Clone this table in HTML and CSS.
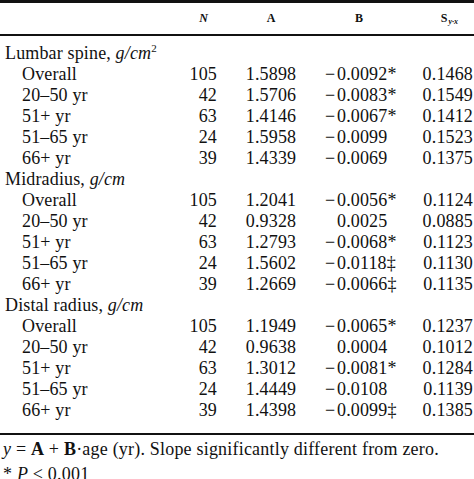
FILE: index.html
```html
<!DOCTYPE html>
<html>
<head>
<meta charset="utf-8">
<link rel="stylesheet" href="styles.css">
</head>
<body>
<table class="data">
  <colgroup>
    <col class="c-label"><col class="c-n"><col class="c-a"><col class="c-b"><col class="c-s">
  </colgroup>
  <thead>
    <tr>
      <th></th>
      <th class="h-n"><i>N</i></th>
      <th class="h-a">A</th>
      <th class="h-b">B</th>
      <th class="h-s">S<sub>y·x</sub></th>
    </tr>
  </thead>
  <tbody>
    <tr class="first"><td class="group" colspan="5">Lumbar spine, <i>g/cm</i><sup>2</sup></td></tr>
    <tr><td class="lbl">Overall</td><td class="n">105</td><td class="a">1.5898</td><td class="b"><span class="sg">−</span>0.0092*</td><td class="s">0.1468</td></tr>
    <tr><td class="lbl">20–50 yr</td><td class="n">42</td><td class="a">1.5706</td><td class="b"><span class="sg">−</span>0.0083*</td><td class="s">0.1549</td></tr>
    <tr><td class="lbl">51+ yr</td><td class="n">63</td><td class="a">1.4146</td><td class="b"><span class="sg">−</span>0.0067*</td><td class="s">0.1412</td></tr>
    <tr><td class="lbl">51–65 yr</td><td class="n">24</td><td class="a">1.5958</td><td class="b"><span class="sg">−</span>0.0099</td><td class="s">0.1523</td></tr>
    <tr><td class="lbl">66+ yr</td><td class="n">39</td><td class="a">1.4339</td><td class="b"><span class="sg">−</span>0.0069</td><td class="s">0.1375</td></tr>
    <tr><td class="group" colspan="5">Midradius, <i>g/cm</i></td></tr>
    <tr><td class="lbl">Overall</td><td class="n">105</td><td class="a">1.2041</td><td class="b"><span class="sg">−</span>0.0056*</td><td class="s">0.1124</td></tr>
    <tr><td class="lbl">20–50 yr</td><td class="n">42</td><td class="a">0.9328</td><td class="b"><span class="sg"></span>0.0025</td><td class="s">0.0885</td></tr>
    <tr><td class="lbl">51+ yr</td><td class="n">63</td><td class="a">1.2793</td><td class="b"><span class="sg">−</span>0.0068*</td><td class="s">0.1123</td></tr>
    <tr><td class="lbl">51–65 yr</td><td class="n">24</td><td class="a">1.5602</td><td class="b"><span class="sg">−</span>0.0118‡</td><td class="s">0.1130</td></tr>
    <tr><td class="lbl">66+ yr</td><td class="n">39</td><td class="a">1.2669</td><td class="b"><span class="sg">−</span>0.0066‡</td><td class="s">0.1135</td></tr>
    <tr><td class="group" colspan="5">Distal radius, <i>g/cm</i></td></tr>
    <tr><td class="lbl">Overall</td><td class="n">105</td><td class="a">1.1949</td><td class="b"><span class="sg">−</span>0.0065*</td><td class="s">0.1237</td></tr>
    <tr><td class="lbl">20–50 yr</td><td class="n">42</td><td class="a">0.9638</td><td class="b"><span class="sg"></span>0.0004</td><td class="s">0.1012</td></tr>
    <tr><td class="lbl">51+ yr</td><td class="n">63</td><td class="a">1.3012</td><td class="b"><span class="sg">−</span>0.0081*</td><td class="s">0.1284</td></tr>
    <tr><td class="lbl">51–65 yr</td><td class="n">24</td><td class="a">1.4449</td><td class="b"><span class="sg">−</span>0.0108</td><td class="s">0.1139</td></tr>
    <tr class="last"><td class="lbl">66+ yr</td><td class="n">39</td><td class="a">1.4398</td><td class="b"><span class="sg">−</span>0.0099‡</td><td class="s">0.1385</td></tr>
  </tbody>
</table>
<div class="notes">
  <p><i>y</i> = <b>A</b> + <b>B</b>·age (yr). Slope significantly different from zero.</p>
  <p>* <i>P</i> &lt; 0.001</p>
</div>
</body>
</html>
```

FILE: styles.css
```css
html, body {
  margin: 0;
  padding: 0;
  background: #fff;
}
body {
  font-family: "Liberation Serif", "DejaVu Serif", serif;
  color: #111;
  width: 474px;
  overflow: hidden;
}
.data {
  border-collapse: collapse;
  width: 474px;
  table-layout: fixed;
  border-top: 3px solid #111;
  font-size: 18px;
}
.c-label { width: 180px; }
.c-n { width: 40px; }
.c-a { width: 102px; }
.c-b { width: 78px; }
.c-s { width: 74px; }

.data thead th {
  height: 31px;
  padding: 0;
  font-size: 12px;
  font-weight: bold;
  vertical-align: middle;
  border-bottom: 2px solid #111;
}
.h-n { text-align: right; padding-right: 12px !important; }
.h-a { text-align: center; }
.h-b { text-align: left; padding-left: 33px !important; }
.h-s { text-align: right; padding-right: 16px !important; }
.h-s sub {
  font-size: 8px;
  font-style: italic;
  vertical-align: -2px;
  margin-left: 1px;
}

.data td {
  padding: 0;
  height: 21px;
  line-height: 21px;
  white-space: nowrap;
  vertical-align: top;
  letter-spacing: 0.15px;
}
.data tr.first td { padding-top: 7px; }
.data tr.last td { padding-bottom: 12px; border-bottom: 2px solid #111; }
.group { padding-left: 5px !important; }
.group sup { font-size: 11px; line-height: 0; vertical-align: 7px; }
.lbl { padding-left: 22px !important; }
.n { text-align: right; padding-right: 3px !important; }
.a { text-align: center; }
.b { text-align: left; padding-left: 3px !important; }
.sg { display: inline-block; width: 12px; }
.s { text-align: right; padding-right: 1px !important; }

.notes {
  font-size: 18px;
  padding: 2px 0 0 3px;
}
.notes p {
  margin: 0;
  line-height: 25px;
  white-space: nowrap;
  letter-spacing: 0.2px;
}
```
